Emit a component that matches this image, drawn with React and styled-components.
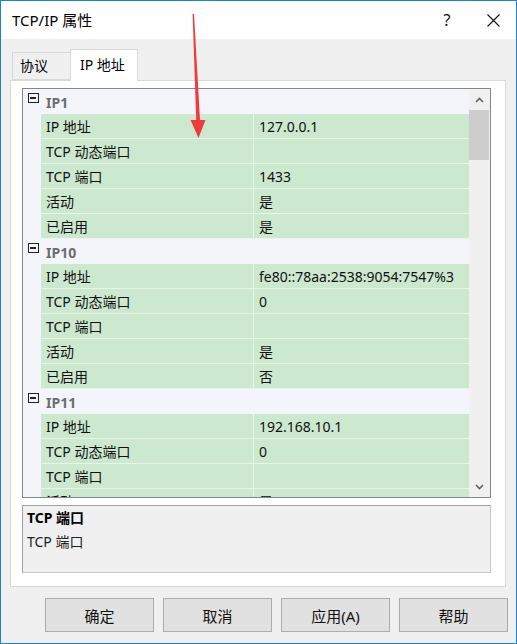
import React from "react";
import styled, { createGlobalStyle } from "styled-components";

const Global = createGlobalStyle`
  html, body { margin: 0; padding: 0; background: #fff; }
  * { box-sizing: border-box; }
  body { font-family: "Noto Sans", "Noto Sans CJK SC", sans-serif; }
`;

const FONT = `"Noto Sans", "Noto Sans CJK SC", sans-serif`;

const Window = styled.div`
  position: relative;
  width: 517px;
  height: 644px;
  border: 1px solid #1883d7;
  display: flex;
  flex-direction: column;
  font-family: ${FONT};
  color: #000;
  overflow: hidden;
`;

const TitleBar = styled.div`
  height: 38px;
  background: #fff;
  display: flex;
  align-items: center;
  padding-left: 11px;
  flex-shrink: 0;
`;

const Title = styled.div`
  font-size: 15px;
  flex: 1;
  margin-top: -1px;
`;

const TitleButton = styled.div`
  width: 46px;
  height: 38px;
  display: flex;
  align-items: center;
  justify-content: center;
  font-size: 16px;
  color: #111;
`;

const Body = styled.div`
  flex: 1;
  background: #f0f0f0;
  display: flex;
  flex-direction: column;
  padding: 10px 10px 0 9px;
`;

const TabStrip = styled.div`
  height: 31px;
  display: flex;
  align-items: flex-end;
  padding-left: 2px;
  position: relative;
  z-index: 1;
`;

const Tab = styled.div`
  height: ${(p) => (p.$active ? 32 : 28)}px;
  margin-bottom: ${(p) => (p.$active ? -1 : 0)}px;
  width: ${(p) => p.$w}px;
  background: ${(p) => (p.$active ? "#fff" : "#f0f0f0")};
  border: 1px solid #d9d9d9;
  border-bottom: ${(p) => (p.$active ? "none" : "1px solid #d9d9d9")};
  border-right: ${(p) => (p.$active ? "1px solid #d9d9d9" : "none")};
  display: flex;
  align-items: center;
  padding-left: ${(p) => p.$pl}px;
  font-size: 14px;
  padding-bottom: ${(p) => (p.$active ? 3 : 2)}px;
`;

const Panel = styled.div`
  height: 507px;
  background: #fff;
  border: 1px solid #d9d9d9;
  padding: 7px 14px 13px 11px;
  display: flex;
  flex-direction: column;
  gap: 7px;
`;

const Grid = styled.div`
  height: 410px;
  border: 1px solid #828790;
  display: flex;
  background: #f4f5fa;
`;

const GridContent = styled.div`
  flex: 1;
  overflow: hidden;
  display: flex;
  flex-direction: column;
`;

const Row = styled.div`
  height: 25px;
  flex-shrink: 0;
  display: flex;
`;

const MarginCell = styled.div`
  width: 18px;
  flex-shrink: 0;
  display: flex;
  justify-content: center;
  padding-top: 4px;
  padding-left: 2px;
`;

const ToggleBox = styled.div`
  width: 11px;
  height: 10px;
  border: 1.5px solid #222;
  display: flex;
  align-items: center;
  justify-content: center;
  &::after {
    content: "";
    width: 6px;
    height: 1.5px;
    background: #222;
  }
`;

const GroupLabel = styled.div`
  flex: 1;
  padding-left: 5px;
  font-size: 14px;
  font-weight: 700;
  color: #6d6d6d;
  display: flex;
  align-items: center;
  padding-top: 1px;
`;

const Cell = styled.div`
  width: ${(p) => (p.$w ? `${p.$w}px` : "auto")};
  flex: ${(p) => (p.$w ? "none" : 1)};
  background: #cce8cf;
  border-bottom: 1px solid #e9f5ea;
  border-right: ${(p) => (p.$divider ? "1px solid #e9f5ea" : "none")};
  padding-left: 5px;
  font-size: 14px;
  display: flex;
  align-items: center;
  white-space: nowrap;
  color: #111;
`;

const ScrollBar = styled.div`
  width: 21px;
  flex-shrink: 0;
  background: #f0f0f0;
  display: flex;
  flex-direction: column;
  padding-right: 1px;
`;

const ScrollArrow = styled.div`
  height: 21px;
  display: flex;
  align-items: center;
  justify-content: center;
  flex-shrink: 0;
`;

const Thumb = styled.div`
  height: 50px;
  background: #cdcdcd;
  flex-shrink: 0;
`;

const Track = styled.div`
  flex: 1;
`;

const Description = styled.div`
  height: 68px;
  background: #f0f0f0;
  border: 1px solid #a0a0a0;
  border-right-color: #c8c8c8;
  border-bottom-color: #c8c8c8;
  padding: 1px 0 0 4px;
  display: flex;
  flex-direction: column;
  gap: 2px;
`;

const DescTitle = styled.div`
  font-size: 14px;
  font-weight: 700;
  line-height: 22px;
`;

const DescText = styled.div`
  font-size: 14px;
  line-height: 22px;
  color: #222;
`;

const ButtonRow = styled.div`
  display: flex;
  justify-content: flex-end;
  gap: 9px;
  margin-top: 11px;
  margin-right: -2px;
`;

const Button = styled.div`
  width: 109px;
  height: 34px;
  background: #e1e1e1;
  border: 1px solid #adadad;
  display: flex;
  align-items: center;
  justify-content: center;
  font-size: 15px;
  color: #111;
`;

const ArrowOverlay = styled.svg`
  position: absolute;
  left: 0;
  top: 0;
  pointer-events: none;
`;

const groups = [
  {
    name: "IP1",
    rows: [
      ["IP 地址", "127.0.0.1"],
      ["TCP 动态端口", ""],
      ["TCP 端口", "1433"],
      ["活动", "是"],
      ["已启用", "是"],
    ],
  },
  {
    name: "IP10",
    rows: [
      ["IP 地址", "fe80::78aa:2538:9054:7547%3"],
      ["TCP 动态端口", "0"],
      ["TCP 端口", ""],
      ["活动", "是"],
      ["已启用", "否"],
    ],
  },
  {
    name: "IP11",
    rows: [
      ["IP 地址", "192.168.10.1"],
      ["TCP 动态端口", "0"],
      ["TCP 端口", ""],
      ["活动", "是"],
      ["已启用", "否"],
    ],
  },
];

const Chevron = ({ up }) => (
  <svg width="9" height="6" viewBox="0 0 9 6">
    <path
      d={up ? "M1 5 L4.5 1.5 L8 5" : "M1 1 L4.5 4.5 L8 1"}
      fill="none"
      stroke="#606060"
      strokeWidth="1.6"
    />
  </svg>
);

export default function App() {
  return (
    <>
      <Global />
      <Window>
        <TitleBar>
          <Title>TCP/IP 属性</Title>
          <TitleButton>?</TitleButton>
          <TitleButton>
            <svg width="13" height="13" viewBox="0 0 13 13">
              <path d="M0.5 0.5 L12.5 12.5 M12.5 0.5 L0.5 12.5" stroke="#111" strokeWidth="1.1" />
            </svg>
          </TitleButton>
        </TitleBar>
        <Body>
          <TabStrip>
            <Tab $w={58} $pl={7}>协议</Tab>
            <Tab $active $w={68} $pl={9}>IP 地址</Tab>
          </TabStrip>
          <Panel>
            <Grid>
              <GridContent>
                {groups.map((g) => (
                  <React.Fragment key={g.name}>
                    <Row>
                      <MarginCell>
                        <ToggleBox />
                      </MarginCell>
                      <GroupLabel>{g.name}</GroupLabel>
                    </Row>
                    {g.rows.map(([k, v], i) => (
                      <Row key={i}>
                        <MarginCell />
                        <Cell $w={213} $divider>
                          {k}
                        </Cell>
                        <Cell>{v}</Cell>
                      </Row>
                    ))}
                  </React.Fragment>
                ))}
              </GridContent>
              <ScrollBar>
                <ScrollArrow>
                  <Chevron up />
                </ScrollArrow>
                <Thumb />
                <Track />
                <ScrollArrow>
                  <Chevron />
                </ScrollArrow>
              </ScrollBar>
            </Grid>
            <Description>
              <DescTitle>TCP 端口</DescTitle>
              <DescText>TCP 端口</DescText>
            </Description>
          </Panel>
          <ButtonRow>
            <Button>确定</Button>
            <Button>取消</Button>
            <Button>应用(A)</Button>
            <Button>帮助</Button>
          </ButtonRow>
        </Body>
        <ArrowOverlay width="517" height="644" viewBox="0 0 517 644">
          <polygon
            points="191.6,13 193,13 199,119 204.5,119 197.5,137 189.5,119 195.2,119"
            fill="#f23a3a"
          />
        </ArrowOverlay>
      </Window>
    </>
  );
}
